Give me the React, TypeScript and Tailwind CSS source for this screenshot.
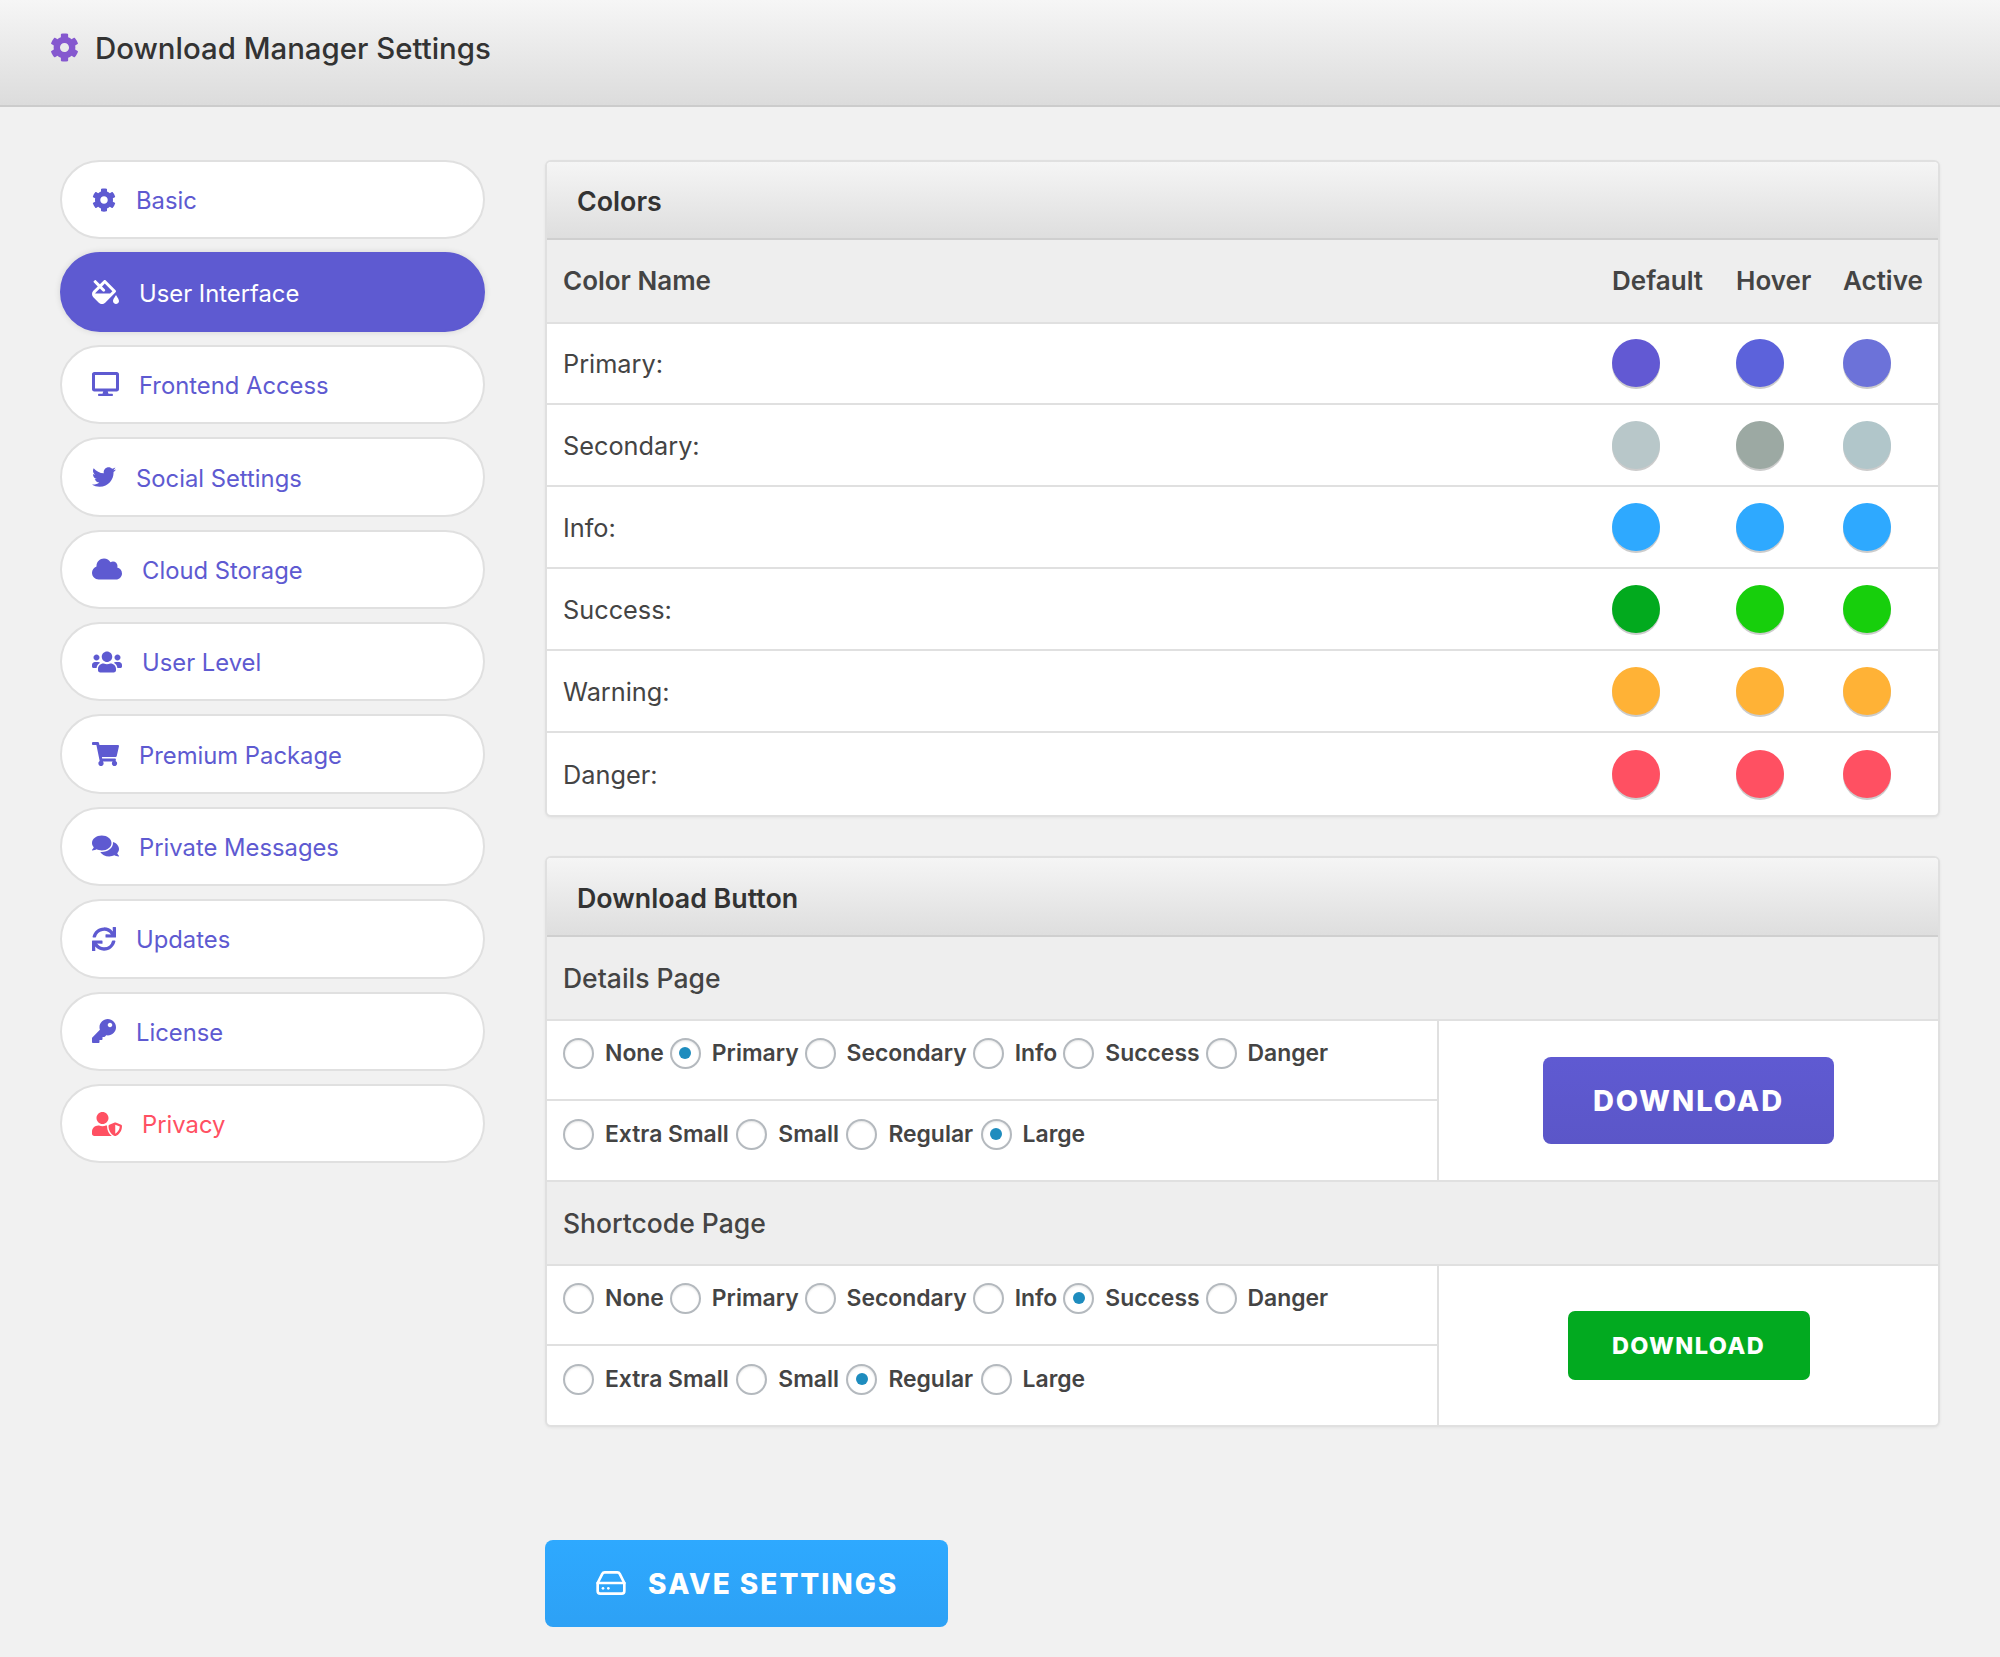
import type { ReactNode } from "react";
import {
  FaCog,
  FaComments,
  FaCloud,
  FaDesktop,
  FaFillDrip,
  FaKey,
  FaShoppingCart,
  FaSync,
  FaTwitter,
  FaUserShield,
  FaUsers,
} from "react-icons/fa";
import { FiHardDrive } from "react-icons/fi";

const menu = [
  { label: "Basic", icon: FaCog, width: "w-[24px]" },
  { label: "User Interface", icon: FaFillDrip, width: "w-[27px]", active: true },
  { label: "Frontend Access", icon: FaDesktop, width: "w-[27px]" },
  { label: "Social Settings", icon: FaTwitter, width: "w-[24px]" },
  { label: "Cloud Storage", icon: FaCloud, width: "w-[30px]" },
  { label: "User Level", icon: FaUsers, width: "w-[30px]" },
  { label: "Premium Package", icon: FaShoppingCart, width: "w-[27px]" },
  { label: "Private Messages", icon: FaComments, width: "w-[27px]" },
  { label: "Updates", icon: FaSync, width: "w-[24px]" },
  { label: "License", icon: FaKey, width: "w-[24px]" },
  { label: "Privacy", icon: FaUserShield, width: "w-[30px]", danger: true },
];

const colors = [
  { name: "Primary:", swatches: ["#6259d3", "#5c62db", "#6c72d9"] },
  { name: "Secondary:", swatches: ["#b8c7c9", "#9ca9a3", "#b1c6ca"] },
  { name: "Info:", swatches: ["#2ea9ff", "#2ea9ff", "#2ea9ff"] },
  { name: "Success:", swatches: ["#02aa1e", "#17cf0c", "#17cf0c"] },
  { name: "Warning:", swatches: ["#ffb236", "#ffb236", "#ffb236"] },
  { name: "Danger:", swatches: ["#ff5062", "#ff5062", "#ff5062"] },
];

const styles = ["None", "Primary", "Secondary", "Info", "Success", "Danger"];
const sizes = ["Extra Small", "Small", "Regular", "Large"];

const Radio = ({ label, checked }: { label: string; checked: boolean }) => (
  <label className="flex items-center">
    <span className="flex items-center justify-center w-[31px] h-[31px] rounded-full bg-white border-2 border-[#b4b9be] shadow-[inset_0_1px_2px_rgba(0,0,0,0.1)]">
      {checked && <span className="w-[12px] h-[12px] rounded-full bg-[#1e8cbe]" />}
    </span>
    <span className="ml-[11px] text-[22.9px] leading-[31px] font-semibold text-[#444]">{label}</span>
  </label>
);

const RadioRow = ({ items, value, className }: { items: string[]; value: string; className: string }) => (
  <div className={`flex items-start pl-[16px] ${className}`}>
    {items.map((item) => (
      <Radio key={item} label={item} checked={item === value} />
    ))}
  </div>
);

const Panel = ({ title, head, children }: { title: string; head: string; children: ReactNode }) => (
  <div className="bg-white border-2 border-[#e0e0e0] rounded-[6px] shadow-[0_1px_3px_rgba(0,0,0,0.06)] overflow-hidden">
    <div className={`flex items-center pl-[30px] pt-[2px] bg-gradient-to-b from-[#f5f5f5] to-[#dedede] border-b-2 border-[#cfcfcf] ${head}`}>
      <h3 className="text-[26.8px] font-semibold text-[#333]">{title}</h3>
    </div>
    {children}
  </div>
);

const ButtonSection = ({
  title,
  style,
  size,
  last,
  button,
}: {
  title: string;
  style: string;
  size: string;
  last?: boolean;
  button: ReactNode;
}) => (
  <>
    <div className="flex items-center h-[84px] pl-[16px] pt-[2px] bg-[#eee] border-b-2 border-[#e0e0e0] text-[26.5px] font-medium text-[#444]">
      {title}
    </div>
    <div className={`flex ${last ? "" : "border-b-2 border-[#e0e0e0]"}`}>
      <div className="flex-1">
        <RadioRow items={styles} value={style} className="gap-[6px] h-[80px] pt-[17px] border-b-2 border-[#e0e0e0]" />
        <RadioRow items={sizes} value={size} className="gap-[7.5px] h-[79px] pt-[18px]" />
      </div>
      <div className="flex items-center justify-center w-[501px] border-l-2 border-[#e0e0e0]">{button}</div>
    </div>
  </>
);

export default function App() {
  return (
    <div className="min-h-[1657px] bg-[#f1f1f1] font-['Inter',sans-serif] text-[#444]">
      <header className="flex items-center gap-[16px] h-[107px] pl-[50px] pb-[10px] bg-gradient-to-b from-[#f6f6f6] to-[#dcdcdc] border-b-2 border-[#ccc]">
        <FaCog className="w-[29px] h-[29px] text-[#8558cf]" />
        <h1 className="pt-[4px] text-[29.4px] font-medium text-[#333]">Download Manager Settings</h1>
      </header>

      <div className="flex gap-[60px] pl-[60px] pt-[53px]">
        <nav className="flex flex-col gap-[13px] w-[425px] shrink-0">
          {menu.map((item) => {
            const Icon = item.icon;
            return (
              <a
                key={item.label}
                href="#"
                className={`flex items-center gap-[20px] h-[79.4px] pl-[30px] rounded-full border-2 text-[23.8px] ${
                  item.active
                    ? "bg-[#5e5ad1] border-[#5e5ad1] text-white shadow-[0_0_6px_rgba(0,0,0,0.12)]"
                    : item.danger
                      ? "bg-white border-[#e0e0e0] text-[#ff5062]"
                      : "bg-white border-[#e0e0e0] text-[#5e5ad1]"
                }`}
              >
                <Icon className={`h-[24px] shrink-0 ${item.width}`} />
                <span className="pt-[3px]">{item.label}</span>
              </a>
            );
          })}
        </nav>

        <main className="w-[1395px] shrink-0">
          <Panel title="Colors" head="h-[77.5px]">
            <div className="grid grid-cols-[1fr_124px_107px_95px] items-center h-[84px] pl-[16px] bg-[#eee] border-b-2 border-[#e0e0e0] text-[26px] font-semibold">
              <div>Color Name</div>
              <div>Default</div>
              <div>Hover</div>
              <div>Active</div>
            </div>
            {colors.map((row, i) => (
              <div
                key={row.name}
                className={`grid grid-cols-[1fr_124px_107px_95px] items-center h-[81.9px] pl-[16px] text-[25.3px] ${
                  i < colors.length - 1 ? "border-b-2 border-[#e0e0e0]" : ""
                }`}
              >
                <div className="pt-[2px]">{row.name}</div>
                {row.swatches.map((color, j) => (
                  <div
                    key={j}
                    className="w-[48px] h-[48px] rounded-full shadow-[0_2px_0_#ccc]"
                    style={{ backgroundColor: color }}
                  />
                ))}
              </div>
            ))}
          </Panel>

          <div className="mt-[39.5px]">
            <Panel title="Download Button" head="h-[78.5px]">
              <ButtonSection
                title="Details Page"
                style="Primary"
                size="Large"
                button={
                  <button className="w-[291px] h-[87px] rounded-[8px] bg-gradient-to-b from-[#5f5ad2] to-[#5b56c8] text-white font-extrabold text-[29px] tracking-[2px]">
                    DOWNLOAD
                  </button>
                }
              />
              <ButtonSection
                title="Shortcode Page"
                style="Success"
                size="Regular"
                last
                button={
                  <button className="w-[242px] h-[69px] rounded-[7px] bg-[#02aa20] text-white font-extrabold text-[23.5px] tracking-[1.4px]">
                    DOWNLOAD
                  </button>
                }
              />
            </Panel>
          </div>

          <button className="flex items-center gap-[21px] mt-[113px] w-[403px] h-[87px] pl-[50px] rounded-[8px] bg-gradient-to-b from-[#2ea9ff] to-[#2da1f5] text-white font-extrabold text-[28px] tracking-[2px]">
            <FiHardDrive className="w-[32px] h-[32px] shrink-0" />
            <span className="pt-[2px]">SAVE SETTINGS</span>
          </button>
        </main>
      </div>
    </div>
  );
}
